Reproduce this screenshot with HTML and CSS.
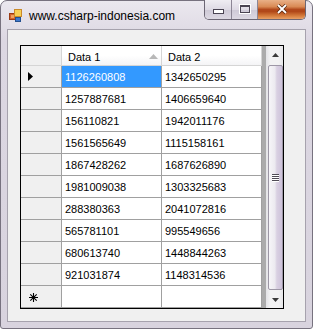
FILE: index.html
```html
<!DOCTYPE html>
<html lang="en">
<head>
    <meta charset="UTF-8">
    <title>www.csharp-indonesia.com</title>
    <link rel="stylesheet" href="styles.css">
</head>
<body>
    <div class="window">
        <div class="titlebar">
            <svg class="app-icon" width="13" height="13" viewBox="0 0 13 13">
                <rect x="0.5" y="4.5" width="6" height="6" fill="#d2642c" stroke="#9a3a14"/>
                <rect x="2" y="6" width="3" height="3" fill="#f2a060"/>
                <rect x="5.5" y="0.5" width="7" height="7" fill="#f7cf55" stroke="#c98a2a"/>
                <rect x="6.5" y="8.5" width="5" height="4" fill="#3f78cc" stroke="#24508f"/>
            </svg>
            <span class="title">www.csharp-indonesia.com</span>
            <div class="caption">
                <div class="cbtn min"><span class="glyph-min"></span></div>
                <div class="cbtn max"><span class="glyph-max"></span></div>
                <div class="cbtn close">
                    <svg width="12" height="10" viewBox="0 0 12 10">
                        <path d="M2 1 L10 9 M10 1 L2 9" stroke="#5a2a10" stroke-width="3.4" fill="none"/>
                        <path d="M2 1 L10 9 M10 1 L2 9" stroke="#fff" stroke-width="1.8" fill="none"/>
                    </svg>
                </div>
            </div>
        </div>
        <div class="client">
            <div class="grid">
                <div class="cells">
                    <div class="row hdr">
                        <div class="rh"></div>
                        <div class="c">Data 1
                            <svg class="sort" width="9" height="5" viewBox="0 0 9 5"><path d="M0 5 L4.5 0 L9 5 Z" fill="#b8b8b8"/></svg>
                        </div>
                        <div class="c">Data 2</div>
                    </div>
                    <div class="row">
                        <div class="rh"><svg width="5" height="9" viewBox="0 0 5 9"><path d="M0 0 L5 4.5 L0 9 Z" fill="#000"/></svg></div>
                        <div class="c sel">1126260808</div>
                        <div class="c">1342650295</div>
                    </div>
                    <div class="row">
                        <div class="rh"></div>
                        <div class="c">1257887681</div>
                        <div class="c">1406659640</div>
                    </div>
                    <div class="row">
                        <div class="rh"></div>
                        <div class="c">156110821</div>
                        <div class="c">1942011176</div>
                    </div>
                    <div class="row">
                        <div class="rh"></div>
                        <div class="c">1561565649</div>
                        <div class="c">1115158161</div>
                    </div>
                    <div class="row">
                        <div class="rh"></div>
                        <div class="c">1867428262</div>
                        <div class="c">1687626890</div>
                    </div>
                    <div class="row">
                        <div class="rh"></div>
                        <div class="c">1981009038</div>
                        <div class="c">1303325683</div>
                    </div>
                    <div class="row">
                        <div class="rh"></div>
                        <div class="c">288380363</div>
                        <div class="c">2041072816</div>
                    </div>
                    <div class="row">
                        <div class="rh"></div>
                        <div class="c">565781101</div>
                        <div class="c">995549656</div>
                    </div>
                    <div class="row">
                        <div class="rh"></div>
                        <div class="c">680613740</div>
                        <div class="c">1448844263</div>
                    </div>
                    <div class="row">
                        <div class="rh"></div>
                        <div class="c">921031874</div>
                        <div class="c">1148314536</div>
                    </div>
                    <div class="row">
                        <div class="rh newrow">
                            <svg width="9" height="9" viewBox="0 0 9 9">
                                <path d="M4.5 0 V9 M0 4.5 H9 M1.3 1.3 L7.7 7.7 M7.7 1.3 L1.3 7.7" stroke="#000" stroke-width="1.1"/>
                            </svg>
                        </div>
                        <div class="c"></div>
                        <div class="c"></div>
                    </div>
                </div>
                <div class="filler"></div>
                <div class="vscroll">
                    <div class="arrow"><svg width="7" height="4" viewBox="0 0 7 4"><path d="M0 4 L3.5 0 L7 4 Z" fill="#3a3a3a"/></svg></div>
                    <div class="track">
                        <div class="thumb">
                            <div class="grip"><span></span><span></span><span></span><span></span></div>
                        </div>
                    </div>
                    <div class="arrow"><svg width="7" height="4" viewBox="0 0 7 4"><path d="M0 0 L3.5 4 L7 0 Z" fill="#3a3a3a"/></svg></div>
                </div>
            </div>
        </div>
    </div>
</body>
</html>
```

FILE: styles.css
```css
body {
    margin: 0;
    background: #fff;
    font-family: 'Liberation Sans', Arial, sans-serif;
}
.window {
    width: 313px;
    height: 329px;
    box-sizing: border-box;
    border: 1px solid #77727f;
    border-radius: 7px 7px 3px 3px;
    background: linear-gradient(#ebe8ef, #dcd7e2 40px, #d8d3de);
    padding: 0 6px 6px;
    display: flex;
    flex-direction: column;
}
.titlebar {
    height: 28px;
    display: flex;
    align-items: center;
    flex-shrink: 0;
}
.app-icon {
    margin: 1px 7px 0 2px;
}
.title {
    font-size: 12px;
    color: #000;
    margin-top: 2px;
}
.caption {
    margin-left: auto;
    align-self: flex-start;
    margin-top: -1px;
    display: flex;
    height: 20px;
    border: 1px solid #6c6674;
    border-top: none;
    border-radius: 0 0 5px 5px;
    overflow: hidden;
    box-sizing: border-box;
}
.cbtn {
    display: flex;
    align-items: center;
    justify-content: center;
    box-sizing: border-box;
}
.min, .max {
    width: 27px;
    background: linear-gradient(#efedf2, #dedae4 50%, #cfcad7 55%, #dcd8e2);
    border-right: 1px solid #8c8695;
}
.max {
    width: 26px;
}
.glyph-min {
    width: 9px;
    height: 3px;
    margin-top: 4px;
    background: #fff;
    border: 1px solid #4a4452;
}
.glyph-max {
    width: 8px;
    height: 5px;
    margin-bottom: 2px;
    background: transparent;
    border: 1px solid #4a4452;
    border-top-width: 2px;
    box-shadow: 0 0 0 1px #fff;
}
.close {
    width: 47px;
    background: linear-gradient(#e9b087, #d98a55 35%, #b2491c 50%, #b04718 60%, #d8803f 85%, #e7a068);
}
.close svg {
    margin-bottom: 1px;
}
.client {
    flex: 1;
    border: 1px solid #a6a2ad;
    background: #f0f0f0;
}
.grid {
    margin: 15px 0 0 12px;
    width: 264px;
    height: 264px;
    box-sizing: border-box;
    border: 1px solid #000;
    display: flex;
    background: #ababab;
}
.cells {
    width: 241px;
    display: flex;
    flex-direction: column;
    background: #fff;
}
.row {
    display: flex;
    height: 22px;
}
.rh, .c {
    box-sizing: border-box;
    border-right: 1px solid #a0a0a0;
    border-bottom: 1px solid #a0a0a0;
    display: flex;
    align-items: center;
}
.rh {
    width: 41px;
    background: #f0f0f0;
    padding-left: 7px;
}
.newrow {
    padding-left: 8px;
    padding-top: 2px;
}
.c {
    width: 100px;
    font-size: 11px;
    color: #000;
    padding-left: 3px;
    white-space: nowrap;
}
.sel {
    background: #3399ff;
    color: #fff;
}
.hdr {
    height: 20px;
}
.hdr .rh {
    border-color: #d5d5d5;
}
.hdr .c {
    background: linear-gradient(#fff, #fff 50%, #f4f4f6);
    border-color: #d5d5d5;
    padding: 2px 3px 0 6px;
    justify-content: space-between;
}
.sort {
    margin-top: -1px;
}
.filler {
    width: 4px;
}
.vscroll {
    width: 17px;
    display: flex;
    flex-direction: column;
    background: linear-gradient(to right, #e3e3e6, #f2f2f3 25%, #f2f2f3 75%, #e6e6e8);
}
.arrow {
    height: 17px;
    display: flex;
    align-items: center;
    justify-content: center;
    padding-left: 2px;
}
.track {
    flex: 1;
    padding: 2px 0 1px 2px;
    display: flex;
}
.thumb {
    flex: 1;
    box-sizing: border-box;
    border: 1px solid #9d97a6;
    border-radius: 2px;
    background: linear-gradient(to right, #f6f5f8, #eceaf0 45%, #d9d0e2 60%, #cdc2da);
    display: flex;
    align-items: center;
    justify-content: center;
}
.grip {
    display: flex;
    flex-direction: column;
    gap: 1px;
}
.grip span {
    width: 7px;
    height: 1px;
    background: #4f4b56;
    box-shadow: 0 1px 0 #fff;
}
```
